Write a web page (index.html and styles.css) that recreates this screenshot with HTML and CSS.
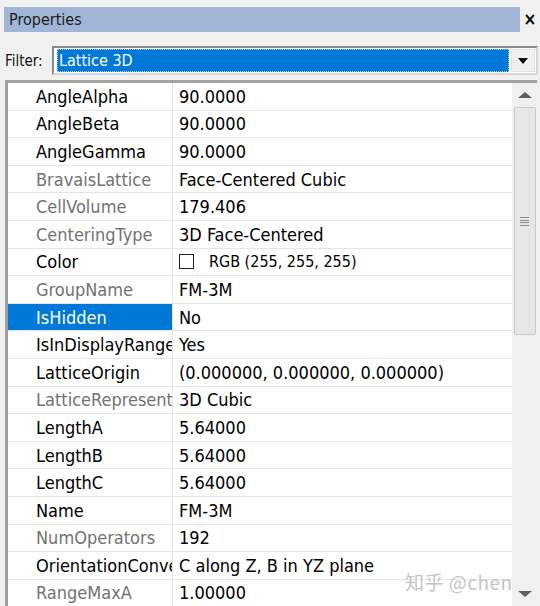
FILE: index.html
```html
<!DOCTYPE html>
<html>
<head>
<meta charset="utf-8">
<link rel="stylesheet" href="styles.css">
</head>
<body>
<div class="panel">
  <div class="titlebar">
    <div class="title">Properties</div>
    <div class="close">×</div>
  </div>
  <div class="filter">
    <span class="filter-label">Filter:</span>
    <div class="combo">
      <div class="combo-sel"><span>Lattice 3D</span></div>
      <div class="combo-btn"><span class="tri-down"></span></div>
    </div>
  </div>
  <div class="grid">
    <div class="rows">
      <div class="row"><div class="name">AngleAlpha</div><div class="val">90.0000</div></div>
      <div class="row"><div class="name">AngleBeta</div><div class="val">90.0000</div></div>
      <div class="row"><div class="name">AngleGamma</div><div class="val">90.0000</div></div>
      <div class="row"><div class="name ro">BravaisLattice</div><div class="val">Face-Centered Cubic</div></div>
      <div class="row"><div class="name ro">CellVolume</div><div class="val">179.406</div></div>
      <div class="row"><div class="name ro">CenteringType</div><div class="val">3D Face-Centered</div></div>
      <div class="row"><div class="name">Color</div><div class="val"><span class="swatch"></span><span class="rgb">RGB (255, 255, 255)</span></div></div>
      <div class="row"><div class="name ro">GroupName</div><div class="val">FM-3M</div></div>
      <div class="row"><div class="name sel">IsHidden</div><div class="val">No</div></div>
      <div class="row"><div class="name">IsInDisplayRange</div><div class="val">Yes</div></div>
      <div class="row"><div class="name">LatticeOrigin</div><div class="val">(0.000000, 0.000000, 0.000000)</div></div>
      <div class="row"><div class="name ro">LatticeRepresentation</div><div class="val">3D Cubic</div></div>
      <div class="row"><div class="name">LengthA</div><div class="val">5.64000</div></div>
      <div class="row"><div class="name">LengthB</div><div class="val">5.64000</div></div>
      <div class="row"><div class="name">LengthC</div><div class="val">5.64000</div></div>
      <div class="row"><div class="name">Name</div><div class="val">FM-3M</div></div>
      <div class="row"><div class="name ro">NumOperators</div><div class="val">192</div></div>
      <div class="row"><div class="name">OrientationConvention</div><div class="val">C along Z, B in YZ plane</div></div>
      <div class="row"><div class="name ro">RangeMaxA</div><div class="val">1.00000</div></div>
    </div>
    <div class="scrollbar">
      <div class="sb-arrow"><span class="tri-up"></span></div>
      <div class="thumb"><span class="grip"></span></div>
      <div class="sb-track"></div>
      <div class="sb-arrow"><span class="tri-down gray"></span></div>
    </div>
  </div>
</div>
<div class="watermark">知乎 @chen</div>
</body>
</html>
```

FILE: styles.css
```css
html, body {
  margin: 0;
  padding: 0;
  background: #f0f0f0;
  width: 540px;
  height: 606px;
  overflow: hidden;
  font-family: "DejaVu Sans Condensed", "DejaVu Sans", sans-serif;
  font-stretch: condensed;
  color: #000;
}
.panel {
  display: flex;
  flex-direction: column;
  height: 606px;
}
.titlebar {
  display: flex;
  margin-top: 7px;
  height: 25px;
}
.title {
  flex: 1;
  margin-left: 4px;
  background: #a1b6d7;
  font-size: 16px;
  line-height: 25px;
  padding-left: 5px;
  color: #1b1b1b;
}
.close {
  width: 20px;
  text-align: center;
  font-size: 17px;
  font-weight: bold;
  line-height: 25px;
  font-family: "DejaVu Sans", sans-serif;
}
.filter {
  display: flex;
  align-items: center;
  margin-top: 14px;
  height: 29px;
}
.filter-label {
  font-size: 15px;
  width: 47px;
  padding-left: 5px;
  color: #111;
}
.combo {
  flex: 1;
  margin-right: 2px;
  height: 29px;
  box-sizing: border-box;
  border: 2px solid;
  border-color: #8a8a8a #d8d8d8 #d8d8d8 #8a8a8a;
  background: #fff;
  display: flex;
  padding: 1px 1px 1px 3px;
}
.combo-sel {
  flex: 1;
  background: #0078d7;
  outline: 1px dotted #a8cde8;
  outline-offset: -1px;
  display: flex;
  align-items: center;
  padding-left: 2px;
  color: #fff;
  font-size: 16px;
}
.combo-btn {
  width: 24px;
  margin-left: 2px;
  background: #f0f0f0;
  border: 1px solid #e0e0e0;
  box-sizing: border-box;
  display: flex;
  align-items: center;
  justify-content: center;
}
.tri-down {
  width: 0;
  height: 0;
  border-left: 5px solid transparent;
  border-right: 5px solid transparent;
  border-top: 6px solid #000;
}
.tri-down.gray {
  border-left-width: 7px;
  border-right-width: 7px;
  border-top: 6px solid #5f5f5f;
}
.tri-up {
  width: 0;
  height: 0;
  border-left: 7px solid transparent;
  border-right: 7px solid transparent;
  border-bottom: 6px solid #5f5f5f;
}
.grid {
  margin: 5px 3px 0 5px;
  flex: 1;
  min-height: 0;
  display: flex;
  border-top: 3px solid;
  border-left: 3px solid;
  border-color: #a0a0a0;
  border-top-color: #a3a3a3;
  box-shadow: inset 1px 1px 0 #d6d6d6;
  overflow: hidden;
}
.rows {
  flex: 1;
  background: #fff;
  overflow: hidden;
}
.row {
  display: grid;
  grid-template-columns: 165px 1fr;
  height: 27.6px;
  box-sizing: border-box;
  border-bottom: 1px solid #e5e5e5;
  font-size: 18px;
}
.name {
  padding-left: 28px;
  white-space: nowrap;
  overflow: hidden;
  display: flex;
  align-items: center;
  border-right: 1px solid #e5e5e5;
}
.name.ro {
  color: #727272;
}
.name.sel {
  background: #0078d7;
  color: #fff;
}
.val {
  padding-left: 6px;
  white-space: nowrap;
  overflow: hidden;
  display: flex;
  align-items: center;
}
.swatch {
  width: 13px;
  height: 13px;
  border: 1px solid #222;
  background: #fff;
  margin-right: 15px;
}
.rgb {
  font-size: 16px;
}
.scrollbar {
  width: 25px;
  background: #f0f0f0;
  display: flex;
  flex-direction: column;
  align-items: center;
}
.sb-arrow {
  height: 24px;
  width: 100%;
  display: flex;
  align-items: center;
  justify-content: center;
}
.thumb {
  width: 22px;
  height: 228px;
  box-sizing: border-box;
  background: #e7e7e7;
  border: 1px solid #c9c9c9;
  border-radius: 2px;
  display: flex;
  align-items: center;
  justify-content: center;
}
.grip {
  width: 9px;
  height: 9px;
  background: repeating-linear-gradient(to bottom, #8a8a8a 0, #8a8a8a 1px, transparent 1px, transparent 2.5px);
}
.sb-track {
  flex: 1;
}
.watermark {
  position: absolute;
  left: 405px;
  top: 568px;
  font-family: "Noto Sans CJK SC", "DejaVu Sans", sans-serif;
  font-size: 19px;
  color: rgba(175, 175, 175, 0.75);
  text-shadow: 0 0 1px #fff;
  letter-spacing: 0.5px;
}
```
